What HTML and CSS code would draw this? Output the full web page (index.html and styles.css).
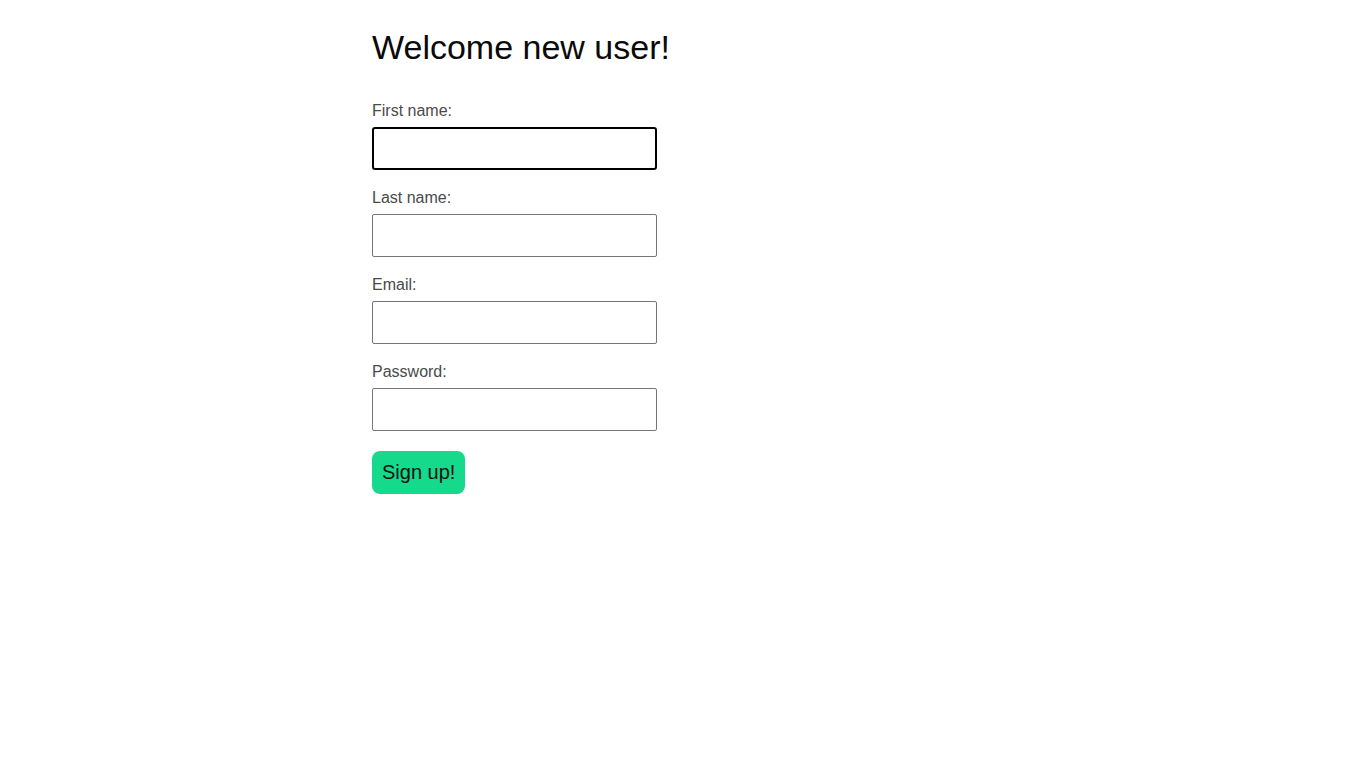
FILE: index.html
```html
<!DOCTYPE html>
<html lang="en">
<head>
<meta charset="utf-8">
<title>Sign up</title>
<link rel="stylesheet" href="styles.css">
</head>
<body>
<main class="page">
  <h1 class="title">Welcome new user!</h1>
  <form class="signup">
    <div class="field">
      <label class="field-label" for="first">First name:</label>
      <input class="field-input is-focused" id="first" type="text">
    </div>
    <div class="field">
      <label class="field-label" for="last">Last name:</label>
      <input class="field-input" id="last" type="text">
    </div>
    <div class="field">
      <label class="field-label" for="email">Email:</label>
      <input class="field-input" id="email" type="email">
    </div>
    <div class="field">
      <label class="field-label" for="password">Password:</label>
      <input class="field-input" id="password" type="password">
    </div>
    <button class="submit" type="button">Sign up!</button>
  </form>
</main>
</body>
</html>
```

FILE: styles.css
```css
html, body {
  margin: 0;
  padding: 0;
  background: #ffffff;
}

body {
  font-family: "Liberation Sans", Arial, sans-serif;
  color: #000;
}

.page {
  width: 601px;
  margin: 0 auto;
  padding-top: 28px;
}

.title {
  margin: 0 0 35px 0;
  font-size: 34px;
  font-weight: normal;
  line-height: 39px;
  color: #0a0a0a;
}

.signup {
  display: flex;
  flex-direction: column;
  align-items: flex-start;
  gap: 19px;
}

.field {
  display: flex;
  flex-direction: column;
  align-items: flex-start;
}

.field-label {
  font-size: 16px;
  line-height: 18px;
  color: #4a4a4a;
  margin-bottom: 7px;
}

.field-input {
  box-sizing: border-box;
  width: 285px;
  height: 43px;
  margin: 0;
  padding: 0 10px;
  border: 1px solid #767676;
  border-radius: 2px;
  background: #fff;
  font-family: inherit;
  font-size: 16px;
  outline: none;
}

.field-input.is-focused {
  border: 2px solid #000;
  border-radius: 3px;
}

.submit {
  margin-top: 1px;
  box-sizing: border-box;
  height: 43px;
  padding: 0 10px;
  border: none;
  border-radius: 8px;
  background: #15d98b;
  color: #111;
  font-family: inherit;
  font-size: 20px;
  line-height: 23px;
  cursor: pointer;
}
```
